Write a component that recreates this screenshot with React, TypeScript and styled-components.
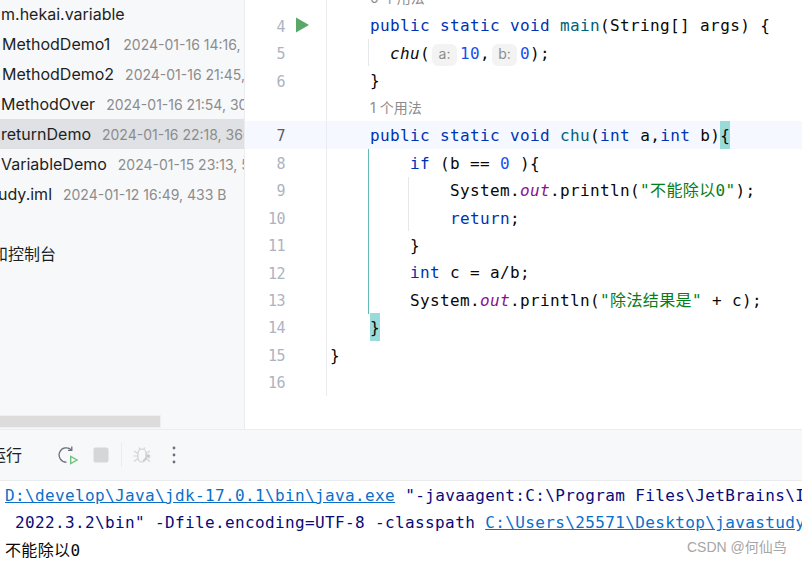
import React from 'react';
import styled, { createGlobalStyle } from 'styled-components';

const Global = createGlobalStyle`
  html, body { margin: 0; padding: 0; background: #fff; overflow: hidden; }
  * { box-sizing: border-box; }
`;

const MONO = `"DejaVu Sans Mono", "Noto Sans CJK SC", monospace`;
const SANS = `Inter, "Noto Sans CJK SC", sans-serif`;
const ROW = 27.45;

const Page = styled.div`
  position: relative;
  width: 802px;
  height: 564px;
  overflow: hidden;
  display: flex;
  flex-direction: column;
`;
const Top = styled.div`
  height: 429px;
  display: flex;
  overflow: hidden;
`;
const Sidebar = styled.aside`
  width: 245px;
  flex: none;
  background: #f7f8fa;
  border-right: 1px solid #ebecf0;
  display: flex;
  flex-direction: column;
  font-family: ${SANS};
  overflow: hidden;
`;
const FileList = styled.div`
  flex: 1;
  min-height: 0;
  margin-top: -1px;
`;
const FileRow = styled.div<{ $selected?: boolean; $gapAbove?: number; $gap?: number }>`
  height: 30px;
  margin-top: ${p => p.$gapAbove ?? 0}px;
  display: flex;
  align-items: center;
  gap: ${p => p.$gap ?? 11}px;
  white-space: nowrap;
  overflow: hidden;
  background: ${p => (p.$selected ? '#dfe1e5' : 'transparent')};
`;
const FileName = styled.span<{ $indent: number }>`
  margin-left: ${p => p.$indent}px;
  font-size: 16px;
  color: #1e1f22;
  flex: none;
`;
const FileMeta = styled.span`
  font-size: 14px;
  color: #8c8c8c;
  flex: none;
`;
const Scrollbar = styled.div`
  width: 161px;
  height: 13px;
  margin-bottom: 1px;
  background: #dcdcdd;
  border: 1px solid #eeeeef;
  border-left: 0;
  flex: none;
`;
const Editor = styled.main`
  flex: 1;
  min-width: 0;
  position: relative;
  overflow: hidden;
`;
const Rows = styled.div`
  margin-top: -16px;
`;
const Row = styled.div<{ $active?: boolean }>`
  height: ${ROW}px;
  display: flex;
  background: ${p => (p.$active ? '#f5f8fe' : 'transparent')};
`;
const Gutter = styled.div`
  width: 82px;
  flex: none;
  display: flex;
  align-items: center;
  border-right: 1px solid #ebecf0;
`;
const LineNo = styled.span<{ $active?: boolean }>`
  width: 40px;
  margin-top: 3px;
  flex: none;
  text-align: right;
  font: 15px ${MONO};
  letter-spacing: -0.5px;
  color: ${p => (p.$active ? '#5a5d6b' : '#aeb3c2')};
`;
const RunMark = styled.svg`
  margin-left: 9px;
  width: 16px;
  height: 16px;
`;
const Code = styled.div`
  flex: 1;
  min-width: 0;
  padding-left: 3px;
  font: 16px/${ROW + 2}px ${MONO};
  letter-spacing: 0.37px;
  color: #080808;
  white-space: pre;
`;
const colors = {
  k: '#0033b3',
  m: '#00627a',
  n: '#1750eb',
  s: '#067d17',
  f: '#871094',
  d: '#080808',
} as const;
const T = styled.span<{ $c: keyof typeof colors; $i?: boolean }>`
  color: ${p => colors[p.$c]};
  font-style: ${p => (p.$i ? 'italic' : 'normal')};
`;
const Usage = styled.span`
  margin-left: 40px;
  font: 14px ${SANS};
  letter-spacing: 0;
  vertical-align: 1px;
  color: #8c8c8c;
`;
const Hint = styled.span`
  display: inline-block;
  width: 25px;
  height: 22px;
  margin: 0 3px 0 2px;
  border-radius: 6px;
  background: #f3f3f4;
  font: 14px/20px ${SANS};
  letter-spacing: 0;
  text-align: center;
  vertical-align: 0;
  color: #8c8c8c;
`;
const Brace = styled.span`
  display: inline-block;
  width: 10px;
  height: ${ROW}px;
  vertical-align: top;
  background: #99dbd8;
`;
const Guide = styled.div<{ $x: number; $y: number; $h: number }>`
  position: absolute;
  left: ${p => p.$x}px;
  top: ${p => p.$y}px;
  width: 1px;
  height: ${p => p.$h}px;
  background: #e6e7ea;
`;
const ScopeLine = styled(Guide)`
  background: #62bab8;
`;
const Toolbar = styled.div`
  height: 52px;
  flex: none;
  background: #f7f8fa;
  border-top: 1px solid #ebecf0;
  border-bottom: 1px solid #ebecf0;
  display: flex;
  align-items: center;
`;
const ToolTitle = styled.span`
  margin: 0 0 2px -10px;
  width: 68px;
  flex: none;
  font: 16px "Noto Sans CJK SC", sans-serif;
  color: #1e1f22;
`;
const ToolIcon = styled.svg<{ $ml: number }>`
  margin-left: ${p => p.$ml}px;
  flex: none;
`;
const ToolDivider = styled.div`
  width: 1px;
  height: 24px;
  margin-left: 12px;
  background: #ebecf0;
`;
const Console = styled.div`
  flex: 1;
  padding: 1px 0 0 5px;
  font: 16px ${MONO};
  letter-spacing: 0.37px;
  color: #0a0a78;
  white-space: pre;
  overflow: hidden;
`;
const ConsoleLine = styled.div<{ $plain?: boolean }>`
  height: ${ROW}px;
  line-height: ${ROW}px;
  color: ${p => (p.$plain ? '#080808' : 'inherit')};
`;
const Link = styled.span`
  color: #0b6fc9;
  text-decoration: underline;
`;
const Watermark = styled.div`
  position: absolute;
  left: 687px;
  top: 538px;
  font: 14px/18px "Liberation Sans", "Noto Sans CJK SC", sans-serif;
  color: #a6a6a6;
  white-space: nowrap;
`;

const files = [
  { name: 'm.hekai.variable', indent: 1 },
  { name: 'MethodDemo1', meta: '2024-01-16 14:16, 300 B', indent: 2, gap: 13 },
  { name: 'MethodDemo2', meta: '2024-01-16 21:45, 500 B', indent: 2 },
  { name: 'MethodOver', meta: '2024-01-16 21:54, 300 B', indent: 1 },
  { name: 'returnDemo', meta: '2024-01-16 22:18, 360 B', indent: 1, selected: true },
  { name: 'VariableDemo', meta: '2024-01-15 23:13, 500 B', indent: 1 },
  { name: 'udy.iml', meta: '2024-01-12 16:49, 433 B', indent: -2 },
];

const Tk = (c: keyof typeof colors, s: string, i?: boolean) => <T $c={c} $i={i}>{s}</T>;

type Line = { no?: number; run?: boolean; active?: boolean; code?: React.ReactNode };
const lines: Line[] = [
  { code: <Usage>0 个用法</Usage> },
  {
    no: 4,
    run: true,
    code: (
      <>
        {'    '}{Tk('k', 'public static void ')}{Tk('m', 'main')}{'(String[] args) {'}
      </>
    ),
  },
  {
    no: 5,
    code: (
      <>
        {'      '}{Tk('d', 'chu', true)}{'('}<Hint>a:</Hint>{Tk('n', '10')}{','}<Hint>b:</Hint>{Tk('n', '0')}{');'}
      </>
    ),
  },
  { no: 6, code: <>{'    }'}</> },
  { code: <Usage>1 个用法</Usage> },
  {
    no: 7,
    active: true,
    code: (
      <>
        {'    '}{Tk('k', 'public static void ')}{Tk('m', 'chu')}{'('}{Tk('k', 'int')}{' a,'}{Tk('k', 'int')}{' b)'}<Brace>{'{'}</Brace>
      </>
    ),
  },
  { no: 8, code: <>{'        '}{Tk('k', 'if')}{' (b == '}{Tk('n', '0')}{' ){'}</> },
  {
    no: 9,
    code: (
      <>
        {'            System.'}{Tk('f', 'out', true)}{'.println('}{Tk('s', '"不能除以0"')}{');'}
      </>
    ),
  },
  { no: 10, code: <>{'            '}{Tk('k', 'return')}{';'}</> },
  { no: 11, code: <>{'        }'}</> },
  { no: 12, code: <>{'        '}{Tk('k', 'int')}{' c = a/b;'}</> },
  {
    no: 13,
    code: (
      <>
        {'        System.'}{Tk('f', 'out', true)}{'.println('}{Tk('s', '"除法结果是"')}{' + c);'}
      </>
    ),
  },
  { no: 14, code: <>{'    '}<Brace>{'}'}</Brace></> },
  { no: 15, code: <>{'}'}</> },
  { no: 16 },
];

export default function App() {
  return (
    <Page>
      <Global />
      <Top>
        <Sidebar>
          <FileList>
            {files.map(f => (
              <FileRow key={f.name} $selected={f.selected} $gap={f.gap}>
                <FileName $indent={f.indent}>{f.name}</FileName>
                {f.meta && <FileMeta>{f.meta}</FileMeta>}
              </FileRow>
            ))}
            <FileRow $gapAbove={29}>
              <FileName $indent={-8}>和控制台</FileName>
            </FileRow>
          </FileList>
          <Scrollbar />
        </Sidebar>
        <Editor>
          <Rows>
            {lines.map((l, i) => (
              <Row key={i} $active={l.active}>
                <Gutter>
                  {l.no !== undefined && <LineNo $active={l.active}>{l.no}</LineNo>}
                  {l.run && (
                    <RunMark viewBox="0 0 16 16">
                      <path d="M2 0.5 15 8 2 15.5Z" fill="#59a869" />
                    </RunMark>
                  )}
                </Gutter>
                <Code>{l.code}</Code>
              </Row>
            ))}
          </Rows>
          <Guide $x={123} $y={39} $h={27} />
          <Guide $x={163} $y={177} $h={54} />
          <ScopeLine $x={123} $y={149} $h={165} />
        </Editor>
      </Top>
      <Toolbar>
        <ToolTitle>运行</ToolTitle>
        <ToolIcon $ml={0} width="21" height="20" viewBox="0 0 21 20" fill="none">
          <path d="M13.500 5A7.200 7.200 0 1 0 8.500 17.200" stroke="#6c707e" strokeWidth="1.3" />
          <path d="M13.800 1.500v3.800h-3.800" stroke="#6c707e" strokeWidth="1.3" />
          <path d="M12.700 11.500v7l6.300-3.500z" stroke="#6fc57e" strokeWidth="1.4" fill="#f7f8fa" />
        </ToolIcon>
        <ToolIcon $ml={14} width="16" height="16" viewBox="0 0 16 16">
          <rect x="0.5" y="0.5" width="15" height="15" rx="2" fill="#d6d6d8" />
        </ToolIcon>
        <ToolDivider />
        <ToolIcon $ml={11} width="18" height="18" viewBox="0 0 18 18" fill="none" stroke="#d2d3d6" strokeWidth="1.2">
          <path d="M5 7a4 4 0 0 1 8 0v5a4 4 0 0 1-8 0z" />
          <path d="M6 1.500 7.500 3.500M12 1.500 10.500 3.500M1 5l4 2.500M17 5l-4 2.500M0.500 10H5M17.500 10H13M1 15.500l4-3M17 15.500l-4-3" />
          <path d="M10 15l6-6M12.500 9H16v3.500" stroke="#c4c5c9" />
        </ToolIcon>
        <ToolIcon $ml={21} width="4" height="18" viewBox="0 0 4 18" fill="#6c707e">
          <circle cx="2" cy="2" r="1.4" />
          <circle cx="2" cy="9" r="1.4" />
          <circle cx="2" cy="16" r="1.4" />
        </ToolIcon>
      </Toolbar>
      <Console>
        <ConsoleLine>
          <Link>{'D:\\develop\\Java\\jdk-17.0.1\\bin\\java.exe'}</Link>
          {' "-javaagent:C:\\Program Files\\JetBrains\\IntelliJ IDEA'}
        </ConsoleLine>
        <ConsoleLine>
          {' 2022.3.2\\bin" -Dfile.encoding=UTF-8 -classpath '}
          <Link>{'C:\\Users\\25571\\Desktop\\javastudy'}</Link>
        </ConsoleLine>
        <ConsoleLine $plain>不能除以0</ConsoleLine>
      </Console>
      <Watermark>CSDN @何仙鸟</Watermark>
    </Page>
  );
}
